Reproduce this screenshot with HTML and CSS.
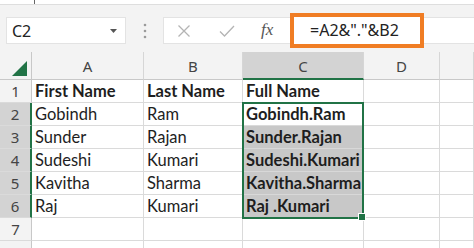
FILE: index.html
```html
<!DOCTYPE html>
<html>
<head>
<meta charset="utf-8">
<link rel="stylesheet" href="styles.css">
</head>
<body>
<div class="app">
  <div class="topstrip"><span class="tick"></span></div>
  <div class="toolbar">
    <div class="namebox">
      <span class="ref">C2</span>
      <svg class="caret" width="7" height="4" viewBox="0 0 7 4"><path d="M0 0H7L3.5 4Z" fill="#555"/></svg>
    </div>
    <div class="grip">
      <svg width="4" height="16" viewBox="0 0 4 16"><circle cx="2" cy="2" r="1.3" fill="#9a9a9a"/><circle cx="2" cy="8" r="1.3" fill="#9a9a9a"/><circle cx="2" cy="14" r="1.3" fill="#9a9a9a"/></svg>
    </div>
    <div class="formula">
      <svg class="ico-x" width="14" height="12" viewBox="0 0 14 12"><path d="M1.5 0.5L12.5 11.5M12.5 0.5L1.5 11.5" stroke="#b4b4b4" stroke-width="1.3" fill="none"/></svg>
      <svg class="ico-check" width="16" height="12" viewBox="0 0 16 12"><path d="M1 6.5L5.5 11L15 1" stroke="#b4b4b4" stroke-width="1.3" fill="none"/></svg>
      <span class="fx">fx</span>
      <div class="formula-box">=A2&amp;"."&amp;B2</div>
    </div>
  </div>
  <div class="sheet">
    <div class="corner"><svg width="15" height="15" viewBox="0 0 15 15"><path d="M15 0V15H0Z" fill="#217346"/></svg></div>
    <div class="colhead">A</div>
    <div class="colhead">B</div>
    <div class="colhead sel">C</div>
    <div class="colhead">D</div>
    <div class="colhead"></div>

    <div class="rowhead">1</div>
    <div class="cell b">First Name</div>
    <div class="cell b">Last Name</div>
    <div class="cell b">Full Name</div>
    <div class="cell"></div>
    <div class="cell"></div>

    <div class="rowhead sel">2</div>
    <div class="cell">Gobindh</div>
    <div class="cell">Ram</div>
    <div class="cell b">Gobindh.Ram</div>
    <div class="cell"></div>
    <div class="cell"></div>

    <div class="rowhead sel">3</div>
    <div class="cell">Sunder</div>
    <div class="cell">Rajan</div>
    <div class="cell b hl">Sunder.Rajan</div>
    <div class="cell"></div>
    <div class="cell"></div>

    <div class="rowhead sel">4</div>
    <div class="cell">Sudeshi</div>
    <div class="cell">Kumari</div>
    <div class="cell b hl">Sudeshi.Kumari</div>
    <div class="cell"></div>
    <div class="cell"></div>

    <div class="rowhead sel">5</div>
    <div class="cell">Kavitha</div>
    <div class="cell">Sharma</div>
    <div class="cell b hl">Kavitha.Sharma</div>
    <div class="cell"></div>
    <div class="cell"></div>

    <div class="rowhead sel">6</div>
    <div class="cell">Raj</div>
    <div class="cell">Kumari</div>
    <div class="cell b hl">Raj .Kumari</div>
    <div class="cell"></div>
    <div class="cell"></div>

    <div class="rowhead">7</div>
    <div class="cell"></div>
    <div class="cell"></div>
    <div class="cell"></div>
    <div class="cell"></div>
    <div class="cell"></div>

    <div class="rowhead"></div>
    <div class="cell"></div>
    <div class="cell"></div>
    <div class="cell"></div>
    <div class="cell"></div>
    <div class="cell"></div>

    <div class="selection"><span class="handle"></span></div>
  </div>
</div>
</body>
</html>
```

FILE: styles.css
```css
* { box-sizing: border-box; }
html, body { margin: 0; padding: 0; }
body { width: 474px; height: 248px; overflow: hidden; background: #fff; }

.app { width: 474px; }

.topstrip {
  height: 5px;
  background: #fff;
  border-bottom: 1px solid #dedede;
  box-shadow: 0 1px 2px rgba(0,0,0,0.08);
}
.topstrip .tick {
  display: block;
  margin-left: 34px;
  width: 1px;
  height: 4px;
  background: #666;
}

.toolbar {
  height: 47px;
  background: #f3f3f3;
  display: flex;
  align-items: flex-start;
  padding-top: 12px;
  padding-left: 6px;
}
.namebox {
  width: 120px;
  height: 27px;
  background: #fff;
  border: 1px solid #e3e3e3;
  display: flex;
  align-items: center;
  justify-content: space-between;
  padding: 0 8px 0 5px;
  font-family: "Noto Sans", sans-serif;
  font-size: 16px;
  color: #222;
}
.namebox .caret { margin-top: 1px; }
.grip {
  width: 37px;
  height: 27px;
  display: flex;
  align-items: center;
  justify-content: center;
}
.formula {
  flex: 1;
  height: 27px;
  background: #fff;
  border: 1px solid #e3e3e3;
  border-right: none;
  display: flex;
  align-items: center;
  padding-left: 13px;
}
.ico-x { margin-right: 28px; }
.ico-check { margin-right: 26px; }
.fx {
  font-family: "Liberation Serif", serif;
  font-style: italic;
  font-size: 17px;
  color: #555;
  width: 14px;
  margin-top: -2px;
}
.formula-box {
  margin-left: 15px;
  width: 134px;
  height: 35px;
  flex: none;
  border: 4px solid #f07d24;
  background: #fff;
  padding-left: 16px;
  display: flex;
  align-items: center;
  font-family: "Noto Sans", sans-serif;
  font-size: 16px;
  color: #222;
  margin-top: -1px;
}

.sheet {
  position: relative;
  display: grid;
  grid-template-columns: 32px 112px 99px 121px 76px 1fr;
  grid-template-rows: 28px repeat(8, 23px);
  font-family: Lato, "Liberation Sans", sans-serif;
  font-size: 16.5px;
  color: #1e1e1e;
  background: #fff;
}
.corner {
  background: #f3f3f3;
  border-right: 1px solid #c8c8c8;
  border-bottom: 1px solid #c8c8c8;
  display: flex;
  align-items: flex-end;
  justify-content: flex-end;
  padding: 0 4px 3px 0;
}
.corner svg { display: block; }
.colhead {
  background: #f3f3f3;
  border-right: 1px solid #d6d6d6;
  border-bottom: 1px solid #c8c8c8;
  display: flex;
  align-items: flex-end;
  justify-content: center;
  padding-bottom: 3px;
  font-family: "Noto Sans", sans-serif;
  font-size: 15px;
  color: #444;
}
.colhead.sel {
  background: #d3d3d3;
  border-bottom: 2px solid #217346;
  padding-bottom: 2px;
}
.rowhead {
  background: #f3f3f3;
  border-right: 1px solid #c8c8c8;
  border-bottom: 1px solid #dadada;
  display: flex;
  align-items: center;
  justify-content: center;
  font-family: "Noto Sans", sans-serif;
  font-size: 15px;
  color: #444;
}
.rowhead.sel {
  background: #d3d3d3;
  border-right: 2px solid #217346;
}
.cell {
  border-right: 1px solid #dadada;
  border-bottom: 1px solid #dadada;
  padding-left: 3px;
  display: flex;
  align-items: center;
  white-space: nowrap;
  overflow: hidden;
}
.cell.b { font-weight: 700; }
.cell.hl { background: #c8c8c8; border-bottom-color: #d8d8d8; }

.selection {
  position: absolute;
  grid-column: 4 / 5;
  grid-row: 3 / 8;
  top: -1px;
  bottom: -1px;
  left: -1px;
  right: 0;
  border: 2px solid #217346;
  pointer-events: none;
}
.selection .handle {
  position: absolute;
  right: -4px;
  bottom: -4px;
  width: 6px;
  height: 6px;
  background: #217346;
  border: 1px solid #fff;
  box-sizing: content-box;
}
```
